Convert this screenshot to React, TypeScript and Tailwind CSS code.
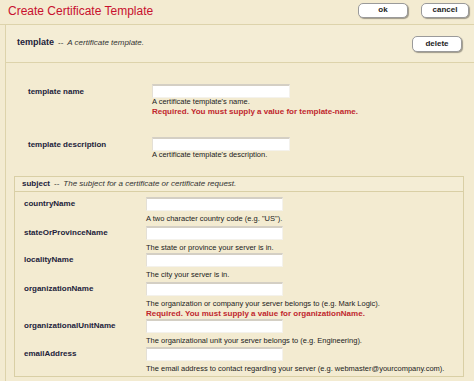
import React from "react";

const font = { fontFamily: '"Liberation Sans", Arial, sans-serif' };

function Btn({ children, className = "" }: { children: React.ReactNode; className?: string }) {
  return (
    <div
      className={
        "flex items-center justify-center rounded-[5px] border border-[#9a9a9a] bg-white text-[8px] font-bold text-[#222] shadow-[1px_1px_1px_rgba(0,0,0,0.35)] " +
        className
      }
    >
      {children}
    </div>
  );
}

function Input({ w }: { w: string }) {
  return (
    <div
      className={
        "h-[14px] border-t-2 border-t-[#d4cfc4] border-l border-l-[#e4e0d6] border-r border-r-[#f4f2ec] border-b border-b-[#f4f2ec] bg-white " +
        w
      }
    />
  );
}

function TopRow({
  label,
  help,
  req,
}: {
  label: string;
  help: string;
  req?: string;
}) {
  return (
    <div className="flex">
      <div className="w-[146px] pl-[22px] pt-[1px] h-[14px] flex items-center text-[8px] font-bold text-[#22223a]">
        {label}
      </div>
      <div className="flex flex-col">
        <Input w="w-[138px]" />
        <div className="h-[10px] leading-[10px] text-[7.5px] text-[#222] mt-[-1px]">{help}</div>
        {req && (
          <div className="h-[10px] leading-[10px] text-[8px] font-bold text-[#c0272d]">{req}</div>
        )}
      </div>
    </div>
  );
}

function SubRow({ label, help, req }: { label: string; help: string; req?: string }) {
  return (
    <div className="flex">
      <div className="w-[131px] pl-[9px] h-[13px] flex items-center text-[8px] font-bold text-[#22223a]">
        {label}
      </div>
      <div className="flex flex-col">
        <Input w="w-[137px]" />
        <div className="h-[10px] leading-[10px] text-[7.5px] text-[#222] mt-[3px]">{help}</div>
        {req && (
          <div className="h-[10px] leading-[10px] text-[8px] font-bold text-[#c0272d]">{req}</div>
        )}
      </div>
    </div>
  );
}

export default function App() {
  return (
    <div style={font} className="w-[474px] h-[381px] overflow-hidden bg-[#f3ebd1]">
      <div className="h-[25px] flex items-center border-b border-[#ddd3ab] bg-[#f3ebd1]">
        <div className="pl-[8px] text-[12px] text-[#c8102e] leading-none mt-[-3px]">
          Create Certificate Template
        </div>
        <div className="ml-auto flex gap-[13px] mr-[5px] mt-[-4px]">
          <Btn className="w-[50px] h-[15px]">ok</Btn>
          <Btn className="w-[48px] h-[15px]">cancel</Btn>
        </div>
      </div>
      <div className="ml-[5px] border-l border-[#ddd3ab] h-[360px]">
        <div className="h-[38px] border-b border-[#ddd3ab] flex items-center bg-[#f4edd5]">
          <div className="pl-[11px] flex items-baseline mt-[-1px]">
            <span className="text-[9px] font-bold text-[#22223a]">template</span>
            <span className="text-[8px] text-[#333] ml-[4px]">--</span>
            <span className="text-[8px] italic text-[#333] ml-[4px]">A certificate template.</span>
          </div>
          <Btn className="ml-auto mr-[12px] w-[50px] h-[16px]">delete</Btn>
        </div>
        <div className="pt-[21px] flex flex-col gap-[20px]">
          <TopRow
            label="template name"
            help="A certificate template's name."
            req="Required. You must supply a value for template-name."
          />
          <TopRow label="template description" help="A certificate template's description." />
        </div>
        <div className="ml-[8px] mt-[16px] w-[450px] h-[201px] border border-[#d9cfa5] bg-[#f3ebd1]">
          <div className="h-[15px] border-b border-[#d9cfa5] flex items-center pl-[7px] bg-[#f4edd5]">
            <span className="text-[8px] font-bold text-[#22223a]">subject</span>
            <span className="text-[8px] text-[#333] ml-[4px]">--</span>
            <span className="text-[8px] italic text-[#333] ml-[4px]">
              The subject for a certificate or certificate request.
            </span>
          </div>
          <div className="pt-[5px] flex flex-col">
            <div className="h-[29px]">
              <SubRow label="countryName" help={'A two character country code (e.g. "US").'} />
            </div>
            <div className="h-[27px]">
              <SubRow label="stateOrProvinceName" help="The state or province your server is in." />
            </div>
            <div className="h-[29px]">
              <SubRow label="localityName" help="The city your server is in." />
            </div>
            <div className="h-[37px]">
              <SubRow
                label="organizationName"
                help="The organization or company your server belongs to (e.g. Mark Logic)."
                req="Required. You must supply a value for organizationName."
              />
            </div>
            <div className="h-[28px]">
              <SubRow
                label="organizationalUnitName"
                help="The organizational unit your server belongs to (e.g. Engineering)."
              />
            </div>
            <div className="h-[28px]">
              <SubRow
                label="emailAddress"
                help="The email address to contact regarding your server (e.g. webmaster@yourcompany.com)."
              />
            </div>
          </div>
        </div>
      </div>
    </div>
  );
}
